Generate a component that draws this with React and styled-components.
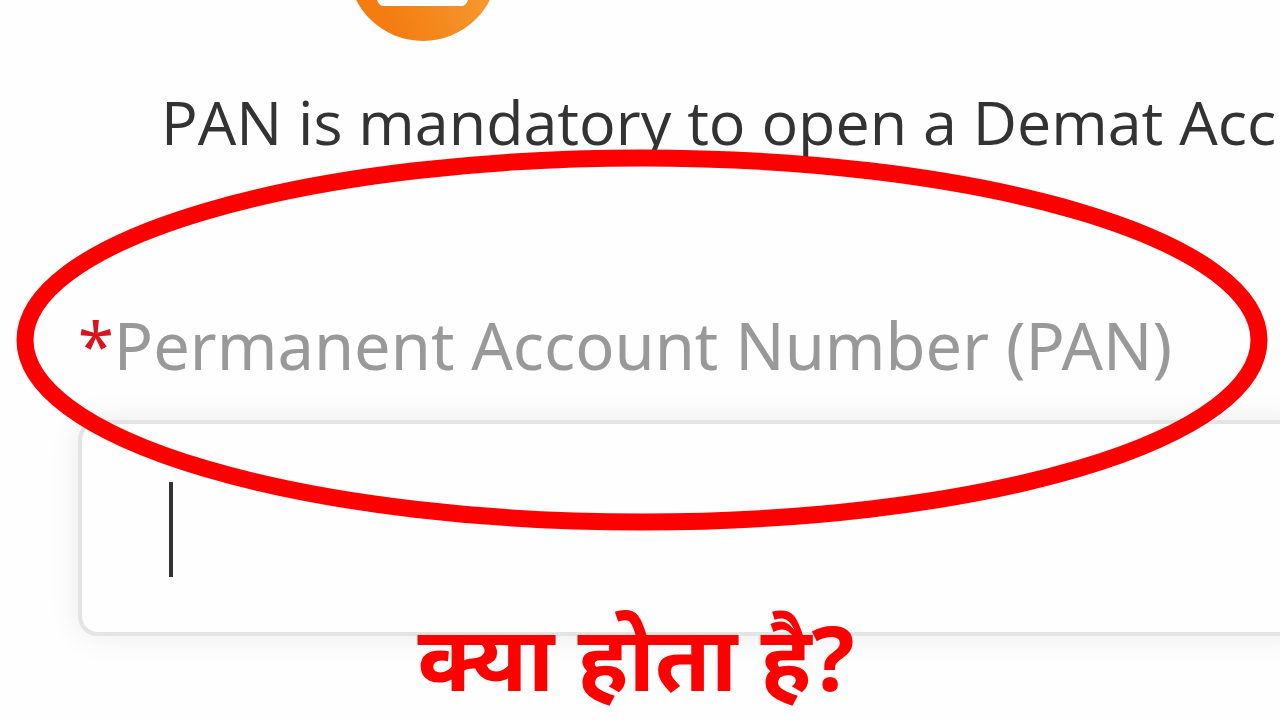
import React from 'react'
import styled, { createGlobalStyle } from 'styled-components'

const GlobalStyle = createGlobalStyle`
	* {
		box-sizing: border-box;
	}

	body {
		margin: 0;
		background: #fefefe;
		font-family: 'Noto Sans', 'Open Sans', sans-serif;
		overflow: hidden;
	}
`

const Page = styled.main`
	position: relative;
	min-height: 100vh;
	overflow: hidden;
`

const StepBadge = styled.svg`
	display: block;
	width: 144px;
	height: 44px;
	margin-left: 351px;
`

const Lead = styled.p`
	margin: 36px 0 0 161px;
	color: #333;
	font-family: 'Open Sans', 'Noto Sans', sans-serif;
	font-size: 61px;
	line-height: 84px;
	white-space: nowrap;
`

const Form = styled.form`
	padding: 132px 0 0 78px;
`

const Label = styled.label`
	display: block;
	color: #999;
	font-size: 65px;
	line-height: 98px;
	white-space: nowrap;
`

const Required = styled.span`
	color: #d8141c;
`

const PanInput = styled.input`
	display: block;
	width: calc(100% + 40px);
	height: 216px;
	margin-top: 26px;
	padding: 0 88px;
	border: 4px solid #e4e4e4;
	border-radius: 20px;
	outline: none;
	background: #fefefe;
	box-shadow: 0 0 32px rgba(0, 0, 0, 0.08);
	font-size: 68px;
	color: #333;
`

const Caret = styled.span`
	position: absolute;
	left: 169px;
	top: 482px;
	width: 4px;
	height: 95px;
	background: #333;
`

const Ring = styled.svg`
	position: absolute;
	left: 0;
	top: 0;
	width: 100%;
	height: 720px;
	pointer-events: none;
`

const Caption = styled.h1`
	position: absolute;
	left: 0;
	right: 0;
	bottom: 4px;
	margin: 0;
	padding-right: 8px;
	color: #fe0000;
	font-size: 90px;
	font-weight: 700;
	line-height: 120px;
	text-align: center;
`

const App = () => (
	<>
		<GlobalStyle />
		<Page>
			<StepBadge viewBox="0 0 144 44" aria-hidden="true">
				<defs>
					<linearGradient id="badge" gradientUnits="userSpaceOnUse" x1="40" y1="30" x2="140" y2="-10">
						<stop offset="0" stopColor="#f47c10" />
						<stop offset="1" stopColor="#f59a30" />
					</linearGradient>
				</defs>
				<circle cx="72" cy="-34" r="75" fill="url(#badge)" />
				<path d="M26 0h91q-2 6-7 6H33q-5 0-7-6z" fill="#fff" />
			</StepBadge>
			<Lead>PAN is mandatory to open a Demat Acc</Lead>
			<Form>
				<Label htmlFor="pan">
					<Required>*</Required>Permanent Account Number (PAN)
				</Label>
				<PanInput id="pan" type="text" required />
			</Form>
			<Caret />
			<Ring viewBox="0 0 1280 720" aria-hidden="true">
				<ellipse cx="642" cy="340" rx="617" ry="182" fill="none" stroke="#fe0000" strokeWidth="17" />
			</Ring>
			<Caption>क्या होता है?</Caption>
		</Page>
	</>
)

export default App
